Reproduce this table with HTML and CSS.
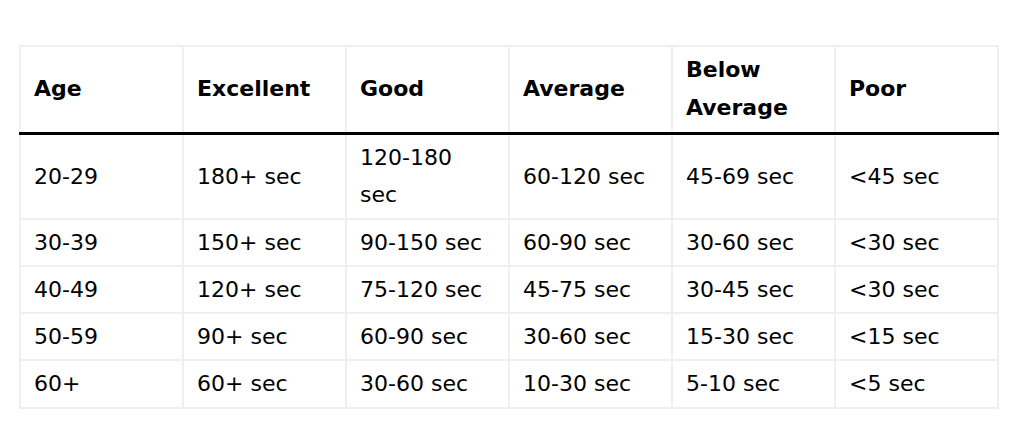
FILE: index.html
```html
<!DOCTYPE html>
<html>
<head>
<meta charset="utf-8">
<link rel="stylesheet" href="styles.css">
</head>
<body>
<div class="wrap">
<table class="grid">
<thead>
<tr><th>Age</th><th>Excellent</th><th>Good</th><th>Average</th><th>Below Average</th><th>Poor</th></tr>
</thead>
<tbody>
<tr><td>20-29</td><td>180+ sec</td><td>120-180 sec</td><td>60-120 sec</td><td>45-69 sec</td><td>&lt;45 sec</td></tr>
<tr><td>30-39</td><td>150+ sec</td><td>90-150 sec</td><td>60-90 sec</td><td>30-60 sec</td><td>&lt;30 sec</td></tr>
<tr><td>40-49</td><td>120+ sec</td><td>75-120 sec</td><td>45-75 sec</td><td>30-45 sec</td><td>&lt;30 sec</td></tr>
<tr><td>50-59</td><td>90+ sec</td><td>60-90 sec</td><td>30-60 sec</td><td>15-30 sec</td><td>&lt;15 sec</td></tr>
<tr><td>60+</td><td>60+ sec</td><td>30-60 sec</td><td>10-30 sec</td><td>5-10 sec</td><td>&lt;5 sec</td></tr>
</tbody>
</table>
</div>
</body>
</html>
```
FILE: styles.css
```css
html, body {
  margin: 0;
  padding: 0;
  background: #fff;
}
.wrap {
  padding: 45px 0 0 19px;
}
.grid {
  width: 980px;
  table-layout: fixed;
  border-collapse: collapse;
  font-family: "DejaVu Sans", Verdana, sans-serif;
  font-size: 22px;
  color: #000;
}
.grid th, .grid td {
  border: 2px solid #efefef;
  padding: 4px 13px;
  line-height: 37.25px;
  text-align: left;
  vertical-align: middle;
}
.grid th {
  font-weight: bold;
  line-height: 38px;
  padding: 4px 13px 5px;
  border-bottom: 3px solid #000;
}
```
